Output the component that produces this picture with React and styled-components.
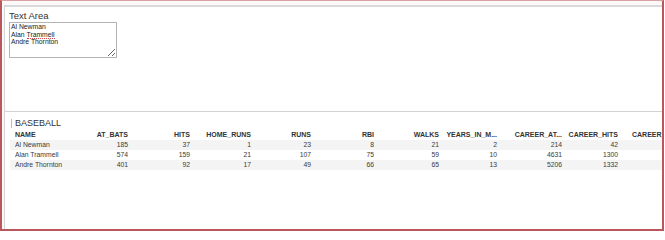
import React from "react";
import styled, { createGlobalStyle } from "styled-components";

const Global = createGlobalStyle`
  html, body { margin: 0; padding: 0; background: #fff; }
  body { font-family: "Liberation Sans", Arial, sans-serif; }
  * { box-sizing: border-box; }
`;

const Frame = styled.div`
  width: 664px;
  height: 231px;
  border-left: 2px solid #b9575c;
  border-right: 2px solid #b9575c;
  border-bottom: 2px solid #b9575c;
  border-top: 1px solid #d9a3a5;
  padding: 4px 0 0 2px;
  overflow: hidden;
  background: #fdf9f9;
`;

const Inner = styled.div`
  height: 100%;
  border-left: 1px solid #d4d4d4;
  background: #fff;
  display: flex;
  flex-direction: column;
  width: 680px;
`;

const TopPanel = styled.section`
  height: 107px;
  flex: none;
  border-top: 2px solid #dadada;
  border-bottom: 1px solid #d2d2d2;
  padding: 3px 0 0 4px;
  display: flex;
  flex-direction: column;
  align-items: flex-start;
`;

const PanelTitle = styled.div`
  font-size: 9.5px;
  line-height: 11px;
  color: #333;
  margin-bottom: 1px;
`;

const TextBox = styled.div`
  width: 108px;
  height: 36px;
  border: 1px solid #b4b4b4;
  padding: 0 1px;
  font-size: 6.8px;
  line-height: 7.7px;
  color: #222;
  resize: both;
  overflow: hidden;
  position: relative;
`;

const Line = styled.div`
  height: 7.7px;
  white-space: nowrap;
`;

const Misspelled = styled.span`
  display: inline-block;
  line-height: 6.6px;
  border-bottom: 1px dotted #d9474c;
`;

const LowerPanel = styled.section`
  flex: 1;
  padding: 6px 0 0 5px;
`;

const GridTitle = styled.div`
  display: flex;
  align-items: center;
  gap: 3px;
  height: 11px;
  font-size: 9px;
  line-height: 11px;
  color: #333;
  margin-bottom: 1px;
`;

const TitleBar = styled.span`
  width: 1px;
  height: 9px;
  background: #bdbdbd;
  margin-left: 1px;
`;

const Table = styled.div`
  display: grid;
  grid-template-columns: 60px 62px 62px 61px 60px 63px 65px 58px 65px 56px 80px;
  grid-auto-rows: 10px;
`;

const Row = styled.div`
  display: contents;
`;

const Cell = styled.div`
  font-size: ${(p) => (p.$head ? "7px" : "6.8px")};
  font-weight: ${(p) => (p.$head ? 700 : 400)};
  line-height: 10px;
  color: ${(p) => (p.$head ? "#333" : "#3a3a3a")};
  background: ${(p) => (p.$band ? "#f4f4f4" : "transparent")};
  text-align: ${(p) => p.$align};
  padding: ${(p) => (p.$align === "right" ? "0 4px 0 0" : p.$last ? "0 0 0 10px" : "0 0 0 5px")};
  white-space: nowrap;
  overflow: hidden;
`;

const headers = [
  "NAME",
  "AT_BATS",
  "HITS",
  "HOME_RUNS",
  "RUNS",
  "RBI",
  "WALKS",
  "YEARS_IN_M...",
  "CAREER_AT...",
  "CAREER_HITS",
  "CAREER_",
];

const rows = [
  ["Al Newman", 185, 37, 1, 23, 8, 21, 2, 214, 42, ""],
  ["Alan Trammell", 574, 159, 21, 107, 75, 59, 10, 4631, 1300, ""],
  ["Andre Thornton", 401, 92, 17, 49, 66, 65, 13, 5206, 1332, ""],
];

const alignOf = (i) => (i === 0 || i === 10 ? "left" : "right");

export default function App() {
  return (
    <>
      <Global />
      <Frame>
        <Inner>
          <TopPanel>
            <PanelTitle>Text Area</PanelTitle>
            <TextBox>
              <Line>Al Newman</Line>
              <Line>
                Alan <Misspelled>Trammell</Misspelled>
              </Line>
              <Line>Andre Thornton</Line>
            </TextBox>
          </TopPanel>
          <LowerPanel>
            <GridTitle>
              <TitleBar />
              BASEBALL
            </GridTitle>
            <Table>
              <Row>
                {headers.map((h, i) => (
                  <Cell key={h} $head $align={alignOf(i)} $last={i === 10}>
                    {h}
                  </Cell>
                ))}
              </Row>
              {rows.map((r, ri) => (
                <Row key={r[0]}>
                  {r.map((v, i) => (
                    <Cell key={i} $band={ri % 2 === 0} $align={alignOf(i)} $last={i === 10}>
                      {v}
                    </Cell>
                  ))}
                </Row>
              ))}
            </Table>
          </LowerPanel>
        </Inner>
      </Frame>
    </>
  );
}
